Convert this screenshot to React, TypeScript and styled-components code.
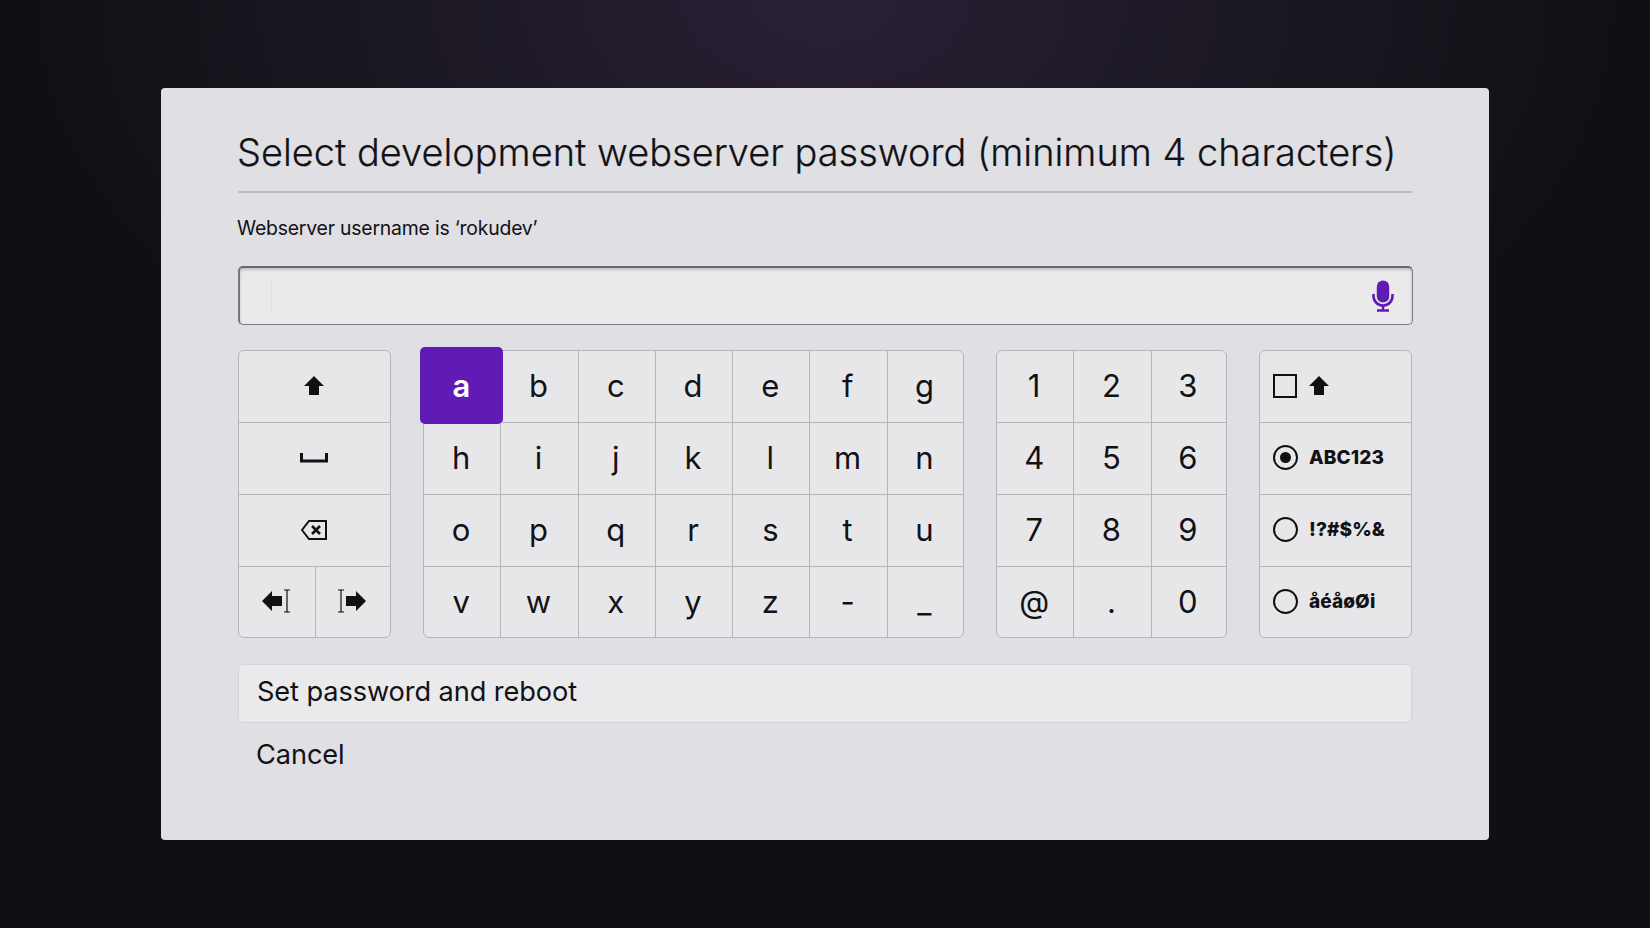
import React from "react";
import styled, { createGlobalStyle } from "styled-components";

const GlobalStyle = createGlobalStyle`
    html, body {
        margin: 0;
        padding: 0;
        background: #101014;
    }
    * {
        box-sizing: border-box;
    }
`;

const Screen = styled.div`
    width: 1650px;
    height: 928px;
    padding: 88px 0 0 161px;
    display: flex;
    overflow: hidden;
    font-family: "Inter", "Liberation Sans", sans-serif;
    color: #121216;
    background:
        radial-gradient(ellipse 800px 500px at 50% 0, #2a2036 0%, #1c1823 52%, #101014 100%),
        #101014;
`;

const Dialog = styled.div`
    width: 1328px;
    height: 752px;
    padding: 40px 77px 0;
    background: #e0dfe3;
    border-radius: 4px;
    display: flex;
    flex-direction: column;
`;

const Title = styled.h1`
    margin: 0;
    height: 65px;
    border-bottom: 2px solid #bdbcc1;
    font-size: 37.95px;
    line-height: 48px;
    font-weight: 300;
    text-indent: -1px;
    white-space: nowrap;
    -webkit-text-stroke: 0.2px #121216;
`;

const Subtitle = styled.p`
    margin: 22px 0 0;
    height: 26px;
    font-size: 19.4px;
    line-height: 26px;
    font-weight: 400;
    letter-spacing: -0.2px;
    text-indent: -1px;
`;

const InputField = styled.div`
    margin-top: 25px;
    width: 1175px;
    height: 59px;
    padding-right: 18px;
    background: #eaeaec;
    border: 1px solid #7d7d80;
    border-top: 2px solid #6a6a6d;
    border-left: 2px solid #77777a;
    border-radius: 5px;
    box-shadow: inset 0 2px 3px rgba(0, 0, 0, 0.18);
    display: flex;
    align-items: center;
    justify-content: space-between;
`;

const Caret = styled.span`
    width: 1px;
    height: 32px;
    margin-left: 31px;
    background: #dfdfe2;
`;

const KeyboardRow = styled.div`
    margin-top: 25px;
    display: flex;
    gap: 32px;
`;

const Pad = styled.div<{ $columns: string; $width: number }>`
    width: ${({ $width }) => $width}px;
    height: 288px;
    display: grid;
    grid-template-columns: ${({ $columns }) => $columns};
    grid-template-rows: 72px 72px 72px 1fr;
    background: #e7e7ea;
    border: 1px solid #b5b5b8;
    border-radius: 6px;
`;

const Key = styled.div<{ $wide?: boolean; $lastRow?: boolean; $lastColumn?: boolean }>`
    position: relative;
    grid-column: ${({ $wide }) => ($wide ? "1 / -1" : "auto")};
    display: flex;
    align-items: center;
    justify-content: center;
    font-size: 31px;
    font-weight: 400;
    line-height: 1;
    padding: 0 2px 2px 0;
    border-bottom: ${({ $lastRow }) => ($lastRow ? "none" : "1.5px solid #b5b5b8")};
    border-right: ${({ $lastColumn }) => ($lastColumn ? "none" : "1.5px solid #b5b5b8")};
`;

const FocusedKey = styled.div`
    position: absolute;
    top: -4px;
    left: -4px;
    width: 83px;
    height: 77px;
    display: flex;
    align-items: center;
    justify-content: center;
    background: #611bb5;
    border-radius: 5px;
    color: #ffffff;
    font-weight: 600;
`;

const ModeKey = styled(Key)`
    justify-content: flex-start;
    gap: 11px;
    padding: 0 0 2px 13px;
    font-size: 19px;
    font-weight: 800;
    letter-spacing: 0.1px;
`;

const Radio = styled.span<{ $checked?: boolean }>`
    width: 25px;
    height: 25px;
    flex: none;
    border: 2.5px solid #111114;
    border-radius: 50%;
    display: flex;
    align-items: center;
    justify-content: center;

    &::after {
        content: "";
        display: ${({ $checked }) => ($checked ? "block" : "none")};
        width: 11px;
        height: 11px;
        border-radius: 50%;
        background: #111114;
    }
`;

const Checkbox = styled.span`
    width: 24px;
    height: 24px;
    flex: none;
    border: 2px solid #111114;
`;

const ActionList = styled.div`
    margin-top: 26px;
    display: flex;
    flex-direction: column;
    gap: 4px;
`;

const Action = styled.div<{ $selected?: boolean }>`
    height: 59px;
    padding: 0 0 4px 18px;
    display: flex;
    align-items: center;
    font-size: 27.2px;
    font-weight: 400;
    letter-spacing: -0.1px;
    border-radius: 5px;
    background: ${({ $selected }) => ($selected ? "#eaeaec" : "transparent")};
    border: ${({ $selected }) => ($selected ? "1.5px solid #d5d5d8" : "none")};
    width: 1174px;
`;

const ArrowUp: React.FC = () => (
    <svg width="22" height="21" viewBox="0 0 22 21" fill="#111114">
        <path d="M11 1 L21 11 H16 V20 H6 V11 H1 Z" />
    </svg>
);

const SpaceIcon: React.FC = () => (
    <svg width="28" height="10" viewBox="0 0 28 10" fill="none" stroke="#111114" strokeWidth="3">
        <path d="M1.5 0 V8 H26.5 V0" />
    </svg>
);

const BackspaceIcon: React.FC = () => (
    <svg width="26" height="20" viewBox="0 0 26 20" fill="none" stroke="#111114">
        <path d="M25 1 H8 L1 10 L8 19 H25 Z" strokeWidth="2" />
        <path d="M11 6 L19 14 M19 6 L11 14" strokeWidth="2.6" />
    </svg>
);

const CursorLeft: React.FC = () => (
    <svg width="28" height="24" viewBox="0 0 28 24" fill="#111114">
        <path d="M0 12 L10 2 V7 H20 V17 H10 V22 Z" />
        <path d="M22 1 H24.5 L25 2 L25.5 1 H28 M25 2 V22 M22 23 H24.5 L25 22 L25.5 23 H28" fill="none" stroke="#111114" strokeWidth="1.2" />
    </svg>
);

const CursorRight: React.FC = () => (
    <svg width="28" height="24" viewBox="0 0 28 24" fill="#111114">
        <path d="M28 12 L18 2 V7 H8 V17 H18 V22 Z" />
        <path d="M0 1 H2.5 L3 2 L3.5 1 H6 M3 2 V22 M0 23 H2.5 L3 22 L3.5 23 H6" fill="none" stroke="#111114" strokeWidth="1.2" />
    </svg>
);

const MicIcon: React.FC = () => (
    <svg width="22" height="32" viewBox="0 0 22 32" fill="none">
        <rect x="4.8" y="0.5" width="12.4" height="22" rx="6.2" fill="#611bb5" />
        <path d="M1.5 14 V16 A9.5 9.5 0 0 0 20.5 16 V14" stroke="#611bb5" strokeWidth="2.6" />
        <path d="M11 25 V30.5 M5 30.5 H17" stroke="#611bb5" strokeWidth="2.4" />
    </svg>
);

const letters = "abcdefghijklmnopqrstuvwxyz-_".split("");
const digits = ["1", "2", "3", "4", "5", "6", "7", "8", "9", "@", ".", "0"];
const modes = [
    { label: "ABC123", checked: true },
    { label: "!?#$%&", checked: false },
    { label: "åéåøØi", checked: false },
];

const App: React.FC = () => {
    return (
        <>
            <GlobalStyle />
            <Screen>
                <Dialog>
                    <Title>Select development webserver password (minimum 4 characters)</Title>
                    <Subtitle>Webserver username is ‘rokudev’</Subtitle>
                    <InputField>
                        <Caret />
                        <MicIcon />
                    </InputField>
                    <KeyboardRow>
                        <Pad $columns="76.5px 1fr" $width={153}>
                            <Key $wide $lastColumn>
                                <ArrowUp />
                            </Key>
                            <Key $wide $lastColumn>
                                <SpaceIcon />
                            </Key>
                            <Key $wide $lastColumn>
                                <BackspaceIcon />
                            </Key>
                            <Key $lastRow>
                                <CursorLeft />
                            </Key>
                            <Key $lastRow $lastColumn>
                                <CursorRight />
                            </Key>
                        </Pad>
                        <Pad $columns="repeat(6, 77.3px) 1fr" $width={541}>
                            {letters.map((letter, i) => (
                                <Key key={letter} $lastRow={i >= 21} $lastColumn={i % 7 === 6}>
                                    {letter}
                                    {letter === "a" && <FocusedKey>a</FocusedKey>}
                                </Key>
                            ))}
                        </Pad>
                        <Pad $columns="repeat(2, 77.3px) 1fr" $width={231}>
                            {digits.map((digit, i) => (
                                <Key key={digit} $lastRow={i >= 9} $lastColumn={i % 3 === 2}>
                                    {digit}
                                </Key>
                            ))}
                        </Pad>
                        <Pad $columns="1fr" $width={153}>
                            <ModeKey $lastColumn>
                                <Checkbox />
                                <ArrowUp />
                            </ModeKey>
                            {modes.map((mode, i) => (
                                <ModeKey key={mode.label} $lastColumn $lastRow={i === 2}>
                                    <Radio $checked={mode.checked} />
                                    {mode.label}
                                </ModeKey>
                            ))}
                        </Pad>
                    </KeyboardRow>
                    <ActionList>
                        <Action $selected>Set password and reboot</Action>
                        <Action>Cancel</Action>
                    </ActionList>
                </Dialog>
            </Screen>
        </>
    );
};

export default App;
